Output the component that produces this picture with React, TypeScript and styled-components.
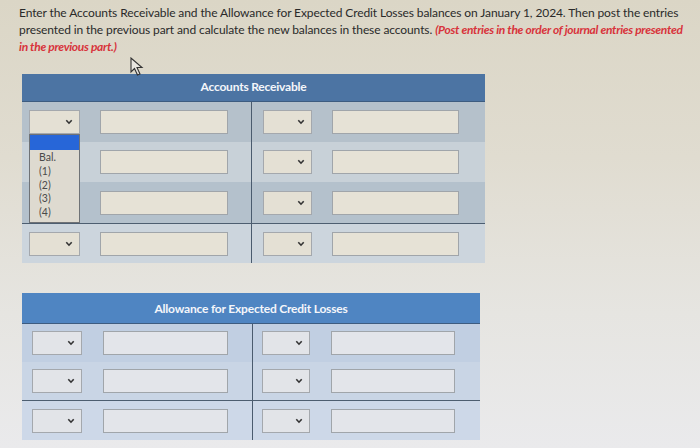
import React from "react";
import styled, { createGlobalStyle } from "styled-components";

const Global = createGlobalStyle`
  html, body { margin: 0; padding: 0; }
  body {
    width: 700px;
    height: 448px;
    overflow: hidden;
    font-family: Lato, "Open Sans", sans-serif;
    background: linear-gradient(180deg, #dbd6c6 0%, #e0dcd0 35%, #e6e5e1 70%, #eaeaec 100%);
  }
`;

const Page = styled.div`
  position: relative;
  width: 700px;
  height: 448px;
  padding: 4px 0 0 0;
  box-sizing: border-box;
`;

const Instructions = styled.p`
  margin: 0 0 0 19px;
  width: 670px;
  font-size: 12px;
  line-height: 17px;
  color: #2a2a2a;
  letter-spacing: -0.1px;
`;

const Red = styled.span`
  color: #d8333b;
  font-weight: 700;
  font-style: italic;
  letter-spacing: -0.3px;
`;

const Table = styled.div<{ $w: number; $top: number }>`
  position: relative;
  margin: ${(p) => p.$top}px 0 0 22px;
  width: ${(p) => p.$w}px;
`;

const Header = styled.div<{ $h: number; $bg: string; $pb: number }>`
  height: ${(p) => p.$h}px;
  background: ${(p) => p.$bg};
  display: flex;
  align-items: center;
  justify-content: center;
  padding-bottom: ${(p) => p.$pb}px;
  box-sizing: border-box;
  color: #f4f6fa;
  font-weight: 700;
  font-size: 12px;
  letter-spacing: -0.2px;
  border-bottom: 1px solid #3d5c80;
`;

const Row = styled.div<{ $h: number; $bg: string; $topLine?: boolean; $left: number }>`
  display: grid;
  grid-template-columns: ${(p) => p.$left}px 1fr;
  height: ${(p) => p.$h}px;
  background: ${(p) => p.$bg};
  border-top: ${(p) => (p.$topLine ? "1.5px solid #4d5e70" : "none")};
  box-sizing: border-box;
`;

const Cell = styled.div<{ $pl: number; $gap: number; $divider?: boolean }>`
  display: flex;
  align-items: center;
  padding-left: ${(p) => p.$pl}px;
  gap: ${(p) => p.$gap}px;
  border-right: ${(p) => (p.$divider ? "1.5px solid #4a5b6e" : "none")};
  position: relative;
`;

const SelectBox = styled.div<{ $w: number; $bg: string }>`
  position: relative;
  width: ${(p) => p.$w}px;
  height: 24px;
  box-sizing: border-box;
  background: ${(p) => p.$bg};
  border: 1px solid #a4a8ad;
  display: flex;
  align-items: center;
  justify-content: flex-end;
  padding-right: 6px;
`;

const InputBox = styled.div<{ $w: number; $bg: string }>`
  width: ${(p) => p.$w}px;
  height: 24px;
  box-sizing: border-box;
  background: ${(p) => p.$bg};
  border: 1px solid #a0a5aa;
`;

const Menu = styled.div`
  position: absolute;
  left: -1px;
  top: 23px;
  width: 51px;
  box-sizing: border-box;
  background: #dedad0;
  border: 1px solid #6f7276;
  z-index: 2;
  padding-bottom: 2px;
`;

const Highlight = styled.div`
  height: 15px;
  background: #2766d8;
  margin-bottom: 1px;
`;

const Option = styled.div`
  font-size: 10.5px;
  line-height: 13.8px;
  color: #4a4a4a;
  padding-left: 9px;
`;

const Cursor = styled.svg`
  position: absolute;
  left: 130px;
  top: 57px;
`;

const Chevron = () => (
  <svg width="8" height="6" viewBox="0 0 8 6">
    <path d="M1.3 1.3 L4 4.2 L6.7 1.3" fill="none" stroke="#333" strokeWidth="1.6" />
  </svg>
);

type Spec = {
  left: number;
  lpl: number;
  lgap: number;
  rpl: number;
  rgap: number;
  selL: number;
  inL: number;
  selR: number;
  inR: number;
  selBg: string;
  inBg: string;
};

const AccountRow: React.FC<{
  h: number;
  bg: string;
  topLine?: boolean;
  spec: Spec;
  menu?: boolean;
}> = ({ h, bg, topLine, spec, menu }) => (
  <Row $h={h} $bg={bg} $topLine={topLine} $left={spec.left}>
    <Cell $pl={spec.lpl} $gap={spec.lgap} $divider>
      <SelectBox $w={spec.selL} $bg={spec.selBg}>
        <Chevron />
        {menu && (
          <Menu>
            <Highlight />
            {["Bal.", "(1)", "(2)", "(3)", "(4)"].map((o) => (
              <Option key={o}>{o}</Option>
            ))}
          </Menu>
        )}
      </SelectBox>
      <InputBox $w={spec.inL} $bg={spec.inBg} />
    </Cell>
    <Cell $pl={spec.rpl} $gap={spec.rgap}>
      <SelectBox $w={spec.selR} $bg={spec.selBg}>
        <Chevron />
      </SelectBox>
      <InputBox $w={spec.inR} $bg={spec.inBg} />
    </Cell>
  </Row>
);

const spec1: Spec = {
  left: 230,
  lpl: 7,
  lgap: 20,
  rpl: 11,
  rgap: 20,
  selL: 51,
  inL: 128,
  selR: 49,
  inR: 127,
  selBg: "#e4e0d4",
  inBg: "#e6e2d6",
};

const spec2: Spec = {
  left: 231,
  lpl: 10,
  lgap: 21,
  rpl: 9,
  rgap: 21,
  selL: 50,
  inL: 125,
  selR: 48,
  inR: 124,
  selBg: "#e2e4e8",
  inBg: "#e3e5ea",
};

export default function App() {
  return (
    <Page>
      <Global />
      <Instructions>
        Enter the Accounts Receivable and the Allowance for Expected Credit Losses balances on January 1, 2024. Then post the entries
        presented in the previous part and calculate the new balances in these accounts.{" "}
        <Red>(Post entries in the order of journal entries presented in the previous part.)</Red>
      </Instructions>

      <Table $w={463} $top={19}>
        <Header $h={28} $bg="#4c74a3" $pb={2}>Accounts Receivable</Header>
        <AccountRow h={40} bg="#b5c1cb" spec={spec1} menu />
        <AccountRow h={40} bg="#c8d1d8" spec={spec1} />
        <AccountRow h={41} bg="#b4c1cc" spec={spec1} />
        <AccountRow h={40} bg="#ccd5dd" spec={spec1} topLine />
      </Table>

      <Table $w={458} $top={30}>
        <Header $h={31} $bg="#4f85c2" $pb={0}>Allowance for Expected Credit Losses</Header>
        <AccountRow h={38} bg="#c1cfe2" spec={spec2} />
        <AccountRow h={38} bg="#c9d5e5" spec={spec2} />
        <AccountRow h={40} bg="#cdd8e8" spec={spec2} topLine />
      </Table>

      <Cursor width="16" height="20" viewBox="0 0 16 20">
        <path d="M1 1 L1 15 L4.5 11.5 L7.5 18 L10 17 L7 10.5 L12 10.5 Z" fill="#e8e6e0" stroke="#333" strokeWidth="1.1" />
      </Cursor>
    </Page>
  );
}
